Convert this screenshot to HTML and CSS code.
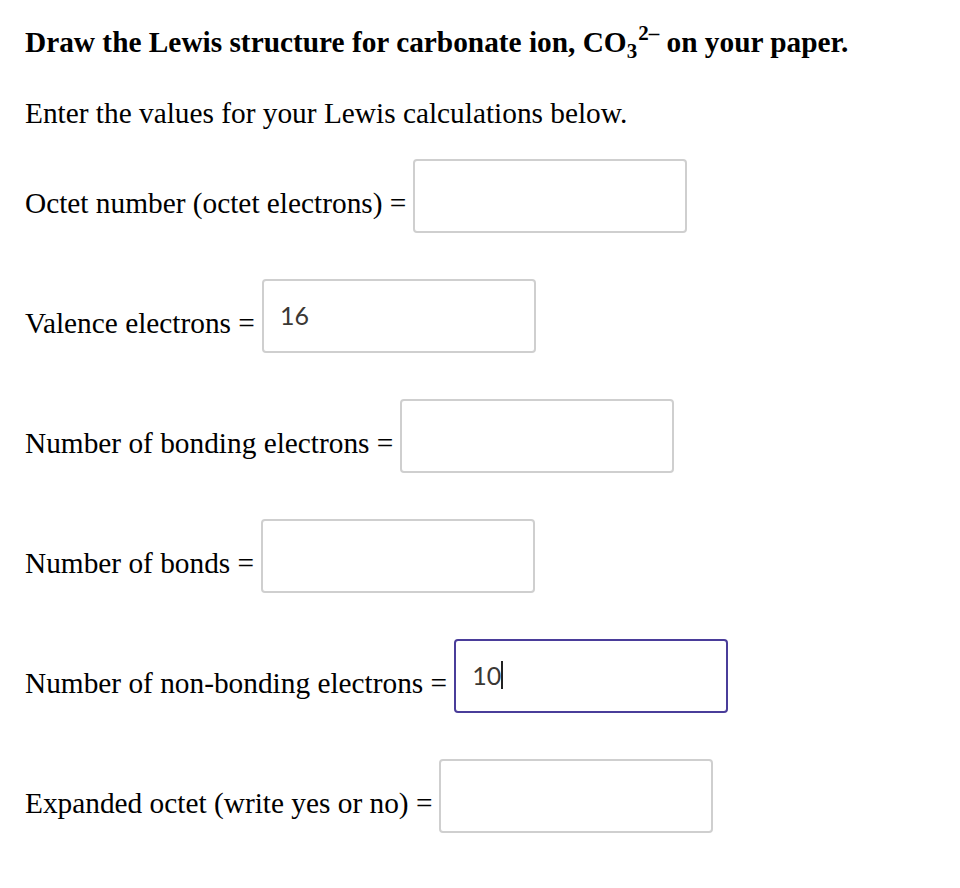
FILE: index.html
```html
<!DOCTYPE html>
<html lang="en">
<head>
<meta charset="utf-8">
<title>Lewis structure</title>
<link rel="stylesheet" href="styles.css">
</head>
<body>
<main class="page">
  <h1 class="title">Draw the Lewis structure for carbonate ion, CO<sub>3</sub><sup>2–</sup> on your paper.</h1>
  <p class="intro">Enter the values for your Lewis calculations below.</p>
  <div class="rows">
    <div class="row"><span class="label">Octet number (octet electrons) =</span><div class="field"></div></div>
    <div class="row"><span class="label">Valence electrons =</span><div class="field">16</div></div>
    <div class="row"><span class="label">Number of bonding electrons =</span><div class="field"></div></div>
    <div class="row"><span class="label">Number of bonds =</span><div class="field"></div></div>
    <div class="row"><span class="label">Number of non-bonding electrons =</span><div class="field focused">10<span class="caret"></span></div></div>
    <div class="row"><span class="label">Expanded octet (write yes or no) =</span><div class="field"></div></div>
  </div>
</main>
</body>
</html>
```
FILE: styles.css
```css
html, body {
  margin: 0;
  padding: 0;
  background: #ffffff;
}
.page {
  padding: 26px 25px 0 25px;
  font-family: "Liberation Serif", "Times New Roman", serif;
  color: #000;
}
.title {
  margin: 0;
  font-size: 29.33px;
  font-weight: bold;
  line-height: 32px;
}
.title sub, .title sup {
  font-size: 21px;
  line-height: 0;
}
.title sub { vertical-align: -6px; }
.title sup { vertical-align: 12px; margin-left: 1px; }
.intro {
  margin: 39px 0 0 0;
  font-size: 29.33px;
  line-height: 32px;
}
.rows {
  display: flex;
  flex-direction: column;
  gap: 46px;
  margin-top: 30px;
}
.row {
  display: flex;
  align-items: center;
  gap: 7px;
}
.label {
  font-size: 29.33px;
  line-height: 32px;
  margin-top: 14px;
}
.field {
  box-sizing: border-box;
  width: 274px;
  height: 74px;
  border: 2px solid #cfcfcf;
  border-radius: 4px;
  padding: 0 16px;
  display: flex;
  align-items: center;
  font-family: Lato, "Open Sans", sans-serif;
  font-size: 25px;
  color: #3b3834;
  padding-bottom: 2px;
}
.field.focused {
  border-color: #4a3d9a;
}
.caret {
  display: inline-block;
  width: 2px;
  height: 28px;
  background: #222;
}
```
